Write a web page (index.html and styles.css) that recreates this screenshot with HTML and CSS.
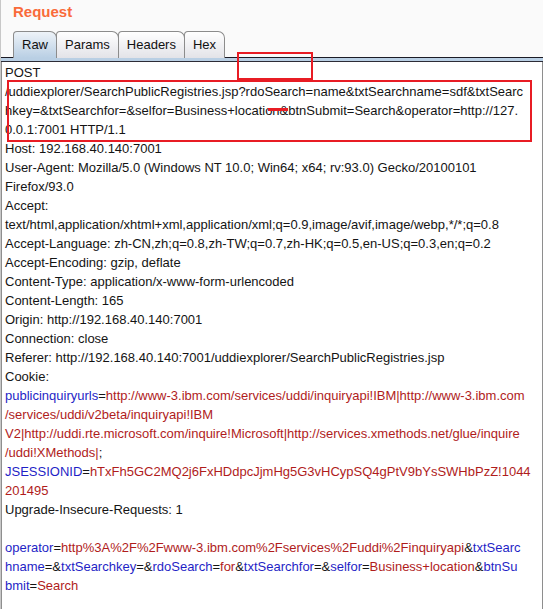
FILE: index.html
```html
<!DOCTYPE html>
<html lang="en">
<head>
    <meta charset="UTF-8">
    <title>Request</title>
    <link rel="stylesheet" href="styles.css">
</head>
<body>
    <div class="panel">
        <div class="title">Request</div>

        <div class="tabs">
            <div class="tab active">Raw</div>
            <div class="tab">Params</div>
            <div class="tab">Headers</div>
            <div class="tab">Hex</div>
        </div>
        <div class="tab-rule"></div>

        <div class="editor">
            <div class="line">POST</div>
            <div class="line">/uddiexplorer/SearchPublicRegistries.jsp?rdoSearch=name&amp;txtSearchname=sdf&amp;txtSearc</div>
            <div class="line">hkey=&amp;txtSearchfor=&amp;selfor=Business+location&amp;btnSubmit=Search&amp;operator=http://127.</div>
            <div class="line">0.0.1:7001 HTTP/1.1</div>
            <div class="line">Host: 192.168.40.140:7001</div>
            <div class="line">User-Agent: Mozilla/5.0 (Windows NT 10.0; Win64; x64; rv:93.0) Gecko/20100101</div>
            <div class="line">Firefox/93.0</div>
            <div class="line">Accept:</div>
            <div class="line">text/html,application/xhtml+xml,application/xml;q=0.9,image/avif,image/webp,*/*;q=0.8</div>
            <div class="line">Accept-Language: zh-CN,zh;q=0.8,zh-TW;q=0.7,zh-HK;q=0.5,en-US;q=0.3,en;q=0.2</div>
            <div class="line">Accept-Encoding: gzip, deflate</div>
            <div class="line">Content-Type: application/x-www-form-urlencoded</div>
            <div class="line">Content-Length: 165</div>
            <div class="line">Origin: http://192.168.40.140:7001</div>
            <div class="line">Connection: close</div>
            <div class="line">Referer: http://192.168.40.140:7001/uddiexplorer/SearchPublicRegistries.jsp</div>
            <div class="line">Cookie:</div>
            <div class="line"><span class="key">publicinquiryurls</span>=<span class="val">http://www-3.ibm.com/services/uddi/inquiryapi!IBM|http://www-3.ibm.com</span></div>
            <div class="line"><span class="val">/services/uddi/v2beta/inquiryapi!IBM</span></div>
            <div class="line"><span class="val">V2|http://uddi.rte.microsoft.com/inquire!Microsoft|http://services.xmethods.net/glue/inquire</span></div>
            <div class="line"><span class="val">/uddi!XMethods|</span>;</div>
            <div class="line"><span class="key">JSESSIONID</span>=<span class="val">hTxFh5GC2MQ2j6FxHDdpcJjmHg5G3vHCypSQ4gPtV9bYsSWHbPzZ!1044</span></div>
            <div class="line"><span class="val">201495</span></div>
            <div class="line">Upgrade-Insecure-Requests: 1</div>
            <div class="line"></div>
            <div class="line"><span class="key">operator</span>=<span class="val">http%3A%2F%2Fwww-3.ibm.com%2Fservices%2Fuddi%2Finquiryapi</span>&amp;<span class="key">txtSearc</span></div>
            <div class="line"><span class="key">hname</span>=&amp;<span class="key">txtSearchkey</span>=&amp;<span class="key">rdoSearch</span>=<span class="val">for</span>&amp;<span class="key">txtSearchfor</span>=&amp;<span class="key">selfor</span>=<span class="val">Business+location</span>&amp;<span class="key">btnSu</span></div>
            <div class="line"><span class="key">bmit</span>=<span class="val">Search</span></div>
        </div>
    </div>

    <!-- annotations drawn over the screenshot -->
    <div class="mark mark-top"></div>
    <div class="mark mark-url"></div>
    <div class="mark-dash"></div>
</body>
</html>
```

FILE: styles.css
```css
* {
    margin: 0;
    padding: 0;
    box-sizing: border-box;
}

body {
    width: 543px;
    height: 609px;
    overflow: hidden;
    background: #fafafa;
    font-family: 'Liberation Sans', Arial, sans-serif;
    position: relative;
}

.panel {
    height: 609px;
    border-left: 1px solid #c8c8c8;
    display: flex;
    flex-direction: column;
}

.title {
    color: #f96b3a;
    font-size: 15px;
    font-weight: bold;
    height: 31px;
    padding: 3px 0 0 12px;
}

.tabs {
    display: flex;
    padding-left: 12px;
    height: 26px;
    position: relative;
    z-index: 1;
}

.tab {
    font-size: 13px;
    color: #111;
    height: 27px;
    padding: 5px 8px 0;
    border: 1px solid #8c8c8c;
    border-bottom: none;
    border-radius: 4px 7px 0 0;
    background: linear-gradient(#ffffff, #e3e3e8);
    margin-right: -1px;
}

.tab.active {
    background: linear-gradient(#eef3f8, #b9cfe4);
}

.tab-rule {
    height: 5px;
    background: #b9cfe4;
    border-top: 1px solid #1b1b25;
    border-bottom: 1px solid #2c2c36;
    margin-right: -1px;
}

.editor {
    flex: 1;
    background: #ffffff;
    border-left: 1px solid #8e8e8e;
    border-right: 1px solid #8e8e8e;
    padding: 1px 0 0 3px;
    font-size: 13px;
    color: #141414;
    overflow: hidden;
}

.line {
    height: 19px;
    line-height: 19px;
    white-space: nowrap;
}

.key {
    color: #1f1fc6;
}

.val {
    color: #b01c1c;
}

.mark {
    position: absolute;
    border: 2px solid #e81c24;
}

.mark-top {
    left: 237px;
    top: 52px;
    width: 76px;
    height: 28px;
}

.mark-url {
    left: 7px;
    top: 80px;
    width: 525px;
    height: 62px;
}

.mark-dash {
    position: absolute;
    left: 268px;
    top: 108px;
    width: 20px;
    height: 3px;
    background: #e81c24;
}
```
